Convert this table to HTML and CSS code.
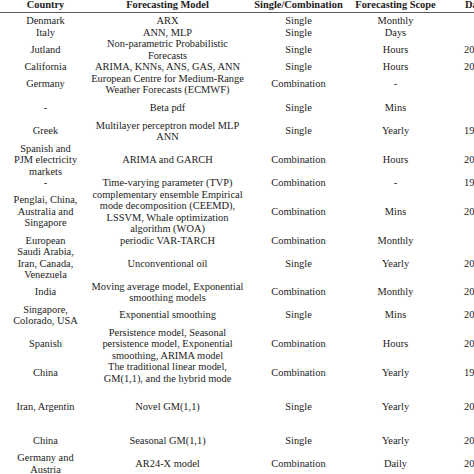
FILE: index.html
```html
<!DOCTYPE html>
<html>
<head>
<meta charset="utf-8">
<link rel="stylesheet" href="styles.css">
</head>
<body>
<div class="frame">
<table class="models">
<colgroup>
<col class="c-country"><col class="c-model"><col class="c-type"><col class="c-scope"><col class="c-date">
</colgroup>
<thead>
<tr><th>Country</th><th>Forecasting Model</th><th>Single/Combination</th><th>Forecasting Scope</th><th class="date">Data</th></tr>
</thead>
<tbody>
<tr class="first"><td>Denmark</td><td>ARX</td><td>Single</td><td>Monthly</td><td class="date"></td></tr>
<tr><td>Italy</td><td>ANN, MLP</td><td>Single</td><td>Days</td><td class="date"></td></tr>
<tr><td>Jutland</td><td>Non-parametric Probabilistic<br>Forecasts</td><td>Single</td><td>Hours</td><td class="date">2008</td></tr>
<tr><td>California</td><td>ARIMA, KNNs, ANS, GAS, ANN</td><td>Single</td><td>Hours</td><td class="date">2011</td></tr>
<tr><td>Germany</td><td>European Centre for Medium-Range<br>Weather Forecasts (ECMWF)</td><td>Combination</td><td>-</td><td class="date"></td></tr>
<tr class="tall2"><td>-</td><td>Beta pdf</td><td>Single</td><td>Mins</td><td class="date"></td></tr>
<tr><td>Greek</td><td>Multilayer perceptron model MLP<br>ANN</td><td>Single</td><td>Yearly</td><td class="date">1999</td></tr>
<tr><td>Spanish and<br>PJM electricity<br>markets</td><td>ARIMA and GARCH</td><td>Combination</td><td>Hours</td><td class="date">2002</td></tr>
<tr><td>-</td><td>Time-varying parameter (TVP)</td><td>Combination</td><td>-</td><td class="date">1998</td></tr>
<tr><td>Penglai, China,<br>Australia and<br>Singapore</td><td>complementary ensemble Empirical<br>mode decomposition (CEEMD),<br>LSSVM, Whale optimization<br>algorithm (WOA)</td><td>Combination</td><td>Mins</td><td class="date">2019</td></tr>
<tr><td>European</td><td>periodic VAR-TARCH</td><td>Combination</td><td>Monthly</td><td class="date"></td></tr>
<tr><td>Saudi Arabia,<br>Iran, Canada,<br>Venezuela</td><td>Unconventional oil</td><td>Single</td><td>Yearly</td><td class="date">2013</td></tr>
<tr><td>India</td><td>Moving average model, Exponential<br>smoothing models</td><td>Combination</td><td>Monthly</td><td class="date">2016</td></tr>
<tr><td>Singapore,<br>Colorado, USA</td><td>Exponential smoothing</td><td>Single</td><td>Mins</td><td class="date">2011</td></tr>
<tr><td>Spanish</td><td>Persistence model, Seasonal<br>persistence model, Exponential<br>smoothing, ARIMA model</td><td>Combination</td><td>Hours</td><td class="date">2012</td></tr>
<tr><td>China</td><td>The traditional linear model,<br>GM(1,1), and the hybrid mode</td><td>Combination</td><td>Yearly</td><td class="date">1998</td></tr>
<tr class="tall4"><td>Iran, Argentin</td><td>Novel GM(1,1)</td><td>Single</td><td>Yearly</td><td class="date">2014</td></tr>
<tr class="tall2s"><td>China</td><td>Seasonal GM(1,1)</td><td>Single</td><td>Yearly</td><td class="date">2017</td></tr>
<tr><td>Germany and<br>Austria</td><td>AR24-X model</td><td>Combination</td><td>Daily</td><td class="date">2016</td></tr>
</tbody>
</table>
</div>
</body>
</html>
```
FILE: styles.css
```css
html, body {
  margin: 0;
  padding: 0;
  background: #ffffff;
  overflow: hidden;
}

.frame {
  width: 474px;
  height: 474px;
  overflow: hidden;
}

.models {
  margin-top: -1.5px;
  border-collapse: collapse;
  table-layout: fixed;
  width: 560px;
  font-family: "Liberation Serif", "Times New Roman", serif;
  font-size: 10.4px;
  line-height: 11.5px;
  color: #1c1c1c;
}

.c-country { width: 91px; }
.c-model { width: 153px; }
.c-type { width: 109px; }
.c-scope { width: 85px; }
.c-date { width: 122px; }

.models th {
  font-weight: bold;
  text-align: center;
  padding: 0 0 2px;
  border-bottom: 1px solid #5a5a5a;
  white-space: nowrap;
}

.models td {
  text-align: center;
  vertical-align: middle;
  padding: 0;
  white-space: nowrap;
}

.models th.date,
.models td.date {
  text-align: left;
  padding-left: 26px;
}

.models th.date {
  padding-left: 27px;
}

.models tr.first td {
  padding-top: 2px;
}

.models tr.tall2 td {
  height: 24px;
}

.models tr.tall2s td {
  height: 22px;
}

.models tr.tall4 td {
  height: 46px;
}
```
